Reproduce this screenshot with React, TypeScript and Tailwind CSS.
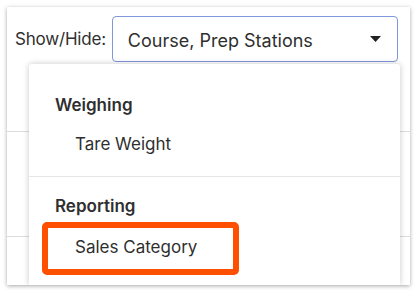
export default function App() {
  return (
    <div className="h-[293px] w-[418px] bg-white pl-[7px] pt-[7px] font-['Inter',sans-serif] text-[#2f2f2f]">
      <div className="relative h-[278px] w-[403px] overflow-hidden bg-white shadow-[0_1px_4px_rgba(0,0,0,0.35)]">
        <div className="flex items-center pl-[8px] pt-[9px]">
          <span className="pt-[2px] text-[17px] tracking-[-0.2px]">Show/Hide:</span>
          <div className="ml-[6px] flex h-[46px] w-[286px] items-center justify-between rounded-[4px] border border-[#7f97dc] pl-[15px] pr-[16px]">
            <span className="pt-[2px] text-[18px]">Course, Prep Stations</span>
            <svg width="11" height="6" viewBox="0 0 11 6">
              <path d="M0 0h11L5.5 6z" fill="#222" />
            </svg>
          </div>
        </div>

        {/* table rows behind the menu */}
        <div className="mt-[69px] border-t border-[#dcdcdc]">
          <div className="h-[105px] border-b border-[#dcdcdc]" />
        </div>

        <div className="absolute bottom-0 left-[22px] right-[10px] top-[57px] rounded-t-[3px] bg-white shadow-[0_0_6px_rgba(0,0,0,0.22)]">
          <div className="pt-[29px]">
            <div className="pl-[26px] text-[17px] font-semibold leading-[24px]">Weighing</div>
            <div className="mt-[15px] pl-[46px] text-[17px] leading-[24px]">Tare Weight</div>
          </div>
          <div className="mt-[20px] border-t border-[#e6e6e6]" />
          <div className="pt-[17px]">
            <div className="pl-[26px] text-[17px] font-semibold leading-[24px]">Reporting</div>
            <div className="mt-[17px] pl-[46px] text-[17px] leading-[24px]">Sales Category</div>
          </div>
          <div className="absolute left-[13px] top-[158px] h-[53px] w-[197px] rounded-[5px] border-[6px] border-[#ff4f00]" />
        </div>
      </div>
    </div>
  );
}
